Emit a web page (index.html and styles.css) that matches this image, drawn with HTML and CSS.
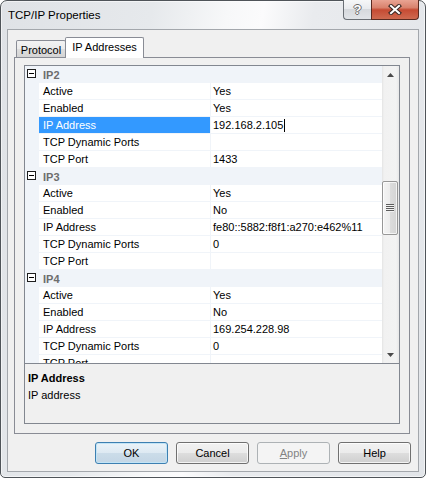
FILE: index.html
```html
<!DOCTYPE html>
<html>
<head>
<meta charset="utf-8">
<title>TCP/IP Properties</title>
<link rel="stylesheet" href="styles.css">
</head>
<body>
<div class="window">
  <div class="titlebar">
    <span class="title">TCP/IP Properties</span>
    <div class="caption-buttons">
      <div class="cap-btn help"><span class="qmark">?</span></div>
      <div class="cap-btn close">
        <svg width="14" height="11" viewBox="0 0 14 11">
          <path d="M3 2 L11 9 M11 2 L3 9" stroke="#3d2a26" stroke-width="4.2" stroke-linecap="square" fill="none"/>
          <path d="M3 2 L11 9 M11 2 L3 9" stroke="#ffffff" stroke-width="2" stroke-linecap="square" fill="none"/>
        </svg>
      </div>
    </div>
  </div>
  <div class="client">
    <div class="tabs">
      <div class="tab">Protocol</div>
      <div class="tab active">IP Addresses</div>
    </div>
    <div class="panel">
      <div class="propgrid">
        <div class="grid-main">
          <div class="rows">
            <div class="cat"><span class="toggle"></span><span class="cat-label">IP2</span></div>
            <div class="prop"><span class="gutter"></span><span class="name">Active</span><span class="value">Yes</span></div>
            <div class="prop"><span class="gutter"></span><span class="name">Enabled</span><span class="value">Yes</span></div>
            <div class="prop selected"><span class="gutter"></span><span class="name">IP Address</span><span class="value">192.168.2.105<span class="caret"></span></span></div>
            <div class="prop"><span class="gutter"></span><span class="name">TCP Dynamic Ports</span><span class="value"></span></div>
            <div class="prop"><span class="gutter"></span><span class="name">TCP Port</span><span class="value">1433</span></div>

            <div class="cat"><span class="toggle"></span><span class="cat-label">IP3</span></div>
            <div class="prop"><span class="gutter"></span><span class="name">Active</span><span class="value">Yes</span></div>
            <div class="prop"><span class="gutter"></span><span class="name">Enabled</span><span class="value">No</span></div>
            <div class="prop"><span class="gutter"></span><span class="name">IP Address</span><span class="value">fe80::5882:f8f1:a270:e462%11</span></div>
            <div class="prop"><span class="gutter"></span><span class="name">TCP Dynamic Ports</span><span class="value">0</span></div>
            <div class="prop"><span class="gutter"></span><span class="name">TCP Port</span><span class="value"></span></div>

            <div class="cat"><span class="toggle"></span><span class="cat-label">IP4</span></div>
            <div class="prop"><span class="gutter"></span><span class="name">Active</span><span class="value">Yes</span></div>
            <div class="prop"><span class="gutter"></span><span class="name">Enabled</span><span class="value">No</span></div>
            <div class="prop"><span class="gutter"></span><span class="name">IP Address</span><span class="value">169.254.228.98</span></div>
            <div class="prop"><span class="gutter"></span><span class="name">TCP Dynamic Ports</span><span class="value">0</span></div>
            <div class="prop"><span class="gutter"></span><span class="name">TCP Port</span><span class="value"></span></div>
          </div>
          <div class="vscroll">
            <div class="arrow">
              <svg width="7" height="4" viewBox="0 0 7 4"><polygon points="0,4 3.5,0 7,4" fill="#4a4a4a"/></svg>
            </div>
            <div class="track">
              <div class="thumb"><span class="grip"></span></div>
            </div>
            <div class="arrow">
              <svg width="7" height="4" viewBox="0 0 7 4"><polygon points="0,0 7,0 3.5,4" fill="#4a4a4a"/></svg>
            </div>
          </div>
        </div>
        <div class="desc">
          <div class="desc-title">IP Address</div>
          <div class="desc-text">IP address</div>
        </div>
      </div>
    </div>
    <div class="buttons">
      <div class="btn default">OK</div>
      <div class="btn">Cancel</div>
      <div class="btn disabled"><span><u>A</u>pply</span></div>
      <div class="btn">Help</div>
    </div>
  </div>
</div>
</body>
</html>
```
FILE: styles.css
```css
* {
  box-sizing: border-box;
}

html,
body {
  margin: 0;
  padding: 0;
}

body {
  width: 426px;
  height: 478px;
  background: #ffffff;
  font-family: "Liberation Sans", Arial, sans-serif;
  font-size: 11px;
  color: #000000;
}

.window {
  width: 426px;
  height: 478px;
  border: 1px solid #4f5459;
  border-radius: 7px 7px 5px 5px;
  padding: 0 6px 5px 6px;
  display: flex;
  flex-direction: column;
  background: linear-gradient(100deg, #dfe2e6 0%, #e6e9ec 30%, #f7f8f9 45%, #fbfbfc 52%, #e9ebee 62%, #e2e5e9 100%);
  box-shadow: inset 0 0 0 1px rgba(255, 255, 255, 0.55);
}

.titlebar {
  height: 28px;
  display: flex;
  justify-content: space-between;
  align-items: flex-start;
}

.title {
  padding-left: 1px;
  line-height: 29px;
  font-size: 11.5px;
  color: #000000;
}

.caption-buttons {
  display: flex;
  margin-top: -1px;
}

.cap-btn {
  height: 20px;
  border: 1px solid #6a6f75;
  border-top: none;
  display: flex;
  align-items: center;
  justify-content: center;
}

.help {
  width: 28px;
  border-right: none;
  border-radius: 0 0 0 4px;
  background: linear-gradient(#f6f7f8 0%, #e9ebee 45%, #d6d9dd 50%, #e1e4e8 100%);
}

.qmark {
  font-family: "Liberation Sans", sans-serif;
  font-weight: bold;
  font-size: 13px;
  line-height: 13px;
  color: #ffffff;
  text-shadow: -1px 0 #6b6b6b, 1px 0 #6b6b6b, 0 -1px #6b6b6b, 0 1px #6b6b6b;
}

.close {
  width: 48px;
  border-radius: 0 0 4px 0;
  background: linear-gradient(#e9a493 0%, #d9826d 40%, #c64b33 52%, #cf6a50 100%);
  border-color: #5a2a20;
}

.client {
  flex: 1;
  border: 1px solid #a3a7ac;
  background: #f0f0f0;
  display: flex;
  flex-direction: column;
}

.tabs {
  height: 27px;
  display: flex;
  align-items: flex-end;
  padding-left: 8px;
}

.tab {
  height: 17px;
  width: 50px;
  border: 1px solid #898c95;
  border-bottom: none;
  border-radius: 2px 2px 0 0;
  background: linear-gradient(#f3f3f3 0%, #ebebeb 50%, #dedede 52%, #d4d4d4 100%);
  display: flex;
  align-items: center;
  justify-content: center;
  padding-top: 1px;
  white-space: nowrap;
}

.tab.active {
  height: 21px;
  width: 79px;
  margin-left: -1px;
  margin-bottom: -1px;
  background: #ffffff;
  position: relative;
  z-index: 1;
  padding-top: 0;
  padding-bottom: 2px;
}

.panel {
  height: 377px;
  margin: 0 8px 0 6px;
  border: 1px solid #898c95;
  background: #f0f0f0;
  padding: 7px 9px 9px 9px;
}

.propgrid {
  height: 359px;
  border: 1px solid #828790;
  display: flex;
  flex-direction: column;
  background: #ffffff;
}

.grid-main {
  height: 297px;
  display: flex;
}

.rows {
  flex: 1;
  overflow: hidden;
  background: #ffffff;
}

.cat {
  height: 17px;
  background: #f0f4f9;
  display: flex;
  align-items: center;
}

.toggle {
  width: 9px;
  height: 9px;
  margin-left: 2px;
  align-self: flex-start;
  margin-top: 3px;
  border: 1px solid #1e1e1e;
  background: #ffffff;
  display: flex;
  align-items: center;
  justify-content: center;
}

.toggle::before {
  content: "";
  width: 5px;
  height: 1px;
  background: #000000;
}

.cat-label {
  margin-left: 7px;
  font-weight: bold;
  color: #6d6d6d;
}

.prop {
  height: 17px;
  display: flex;
  border-bottom: 1px solid #f0f4f9;
}

.gutter {
  width: 14px;
  flex: none;
  background: #f0f4f9;
}

.name {
  width: 172px;
  flex: none;
  padding-left: 4px;
  border-right: 1px solid #f0f4f9;
  line-height: 16px;
  white-space: nowrap;
  overflow: hidden;
}

.value {
  flex: 1;
  padding-left: 2px;
  line-height: 16px;
  white-space: nowrap;
  overflow: hidden;
}

.prop.selected .name {
  background: #3399ff;
  color: #ffffff;
}

.caret {
  display: inline-block;
  width: 1px;
  height: 13px;
  margin-left: 1px;
  background: #000000;
  vertical-align: -3px;
}

.vscroll {
  width: 17px;
  flex: none;
  display: flex;
  flex-direction: column;
  background: linear-gradient(90deg, #e4e4e4 0, #f1f1f1 2px, #f3f3f3 14px, #e8e8e8 17px);
}

.arrow {
  height: 17px;
  display: flex;
  align-items: center;
  justify-content: center;
}

.track {
  flex: 1;
  padding-top: 98px;
}

.thumb {
  width: 16px;
  height: 54px;
  border: 1px solid #979797;
  border-radius: 2px;
  background: linear-gradient(90deg, #f4f4f4 0%, #ececec 50%, #dcdcdc 52%, #d4d4d4 100%);
  box-shadow: inset 0 0 0 1px rgba(255, 255, 255, 0.7);
  display: flex;
  align-items: center;
  justify-content: center;
}

.grip {
  width: 8px;
  height: 8px;
  background: repeating-linear-gradient(#5c5c5c 0 1px, #f2f2f2 1px 2px);
}

.desc {
  flex: 1;
  border-top: 1px solid #828790;
  background: #f0f0f0;
  padding: 6px 3px;
  line-height: 17px;
}

.desc-title {
  font-weight: bold;
}

.buttons {
  display: flex;
  justify-content: flex-end;
  gap: 8px;
  margin-top: 8px;
  padding-right: 7px;
}

.btn {
  width: 73px;
  height: 22px;
  border: 1px solid #707070;
  border-radius: 3px;
  background: linear-gradient(#f2f2f2 0%, #ebebeb 50%, #dddddd 52%, #cfcfcf 100%);
  box-shadow: inset 0 0 0 1px rgba(255, 255, 255, 0.75);
  display: flex;
  align-items: center;
  justify-content: center;
}

.btn.default {
  border-color: #3c7fb1;
  background: linear-gradient(#eaf3f9 0%, #dde9f2 50%, #cbdce9 52%, #c3d6e5 100%);
  box-shadow: inset 0 0 0 1px #c2e4f6;
}

.btn.disabled {
  border-color: #adb2b5;
  background: #f4f4f4;
  box-shadow: none;
  color: #838383;
}
```
